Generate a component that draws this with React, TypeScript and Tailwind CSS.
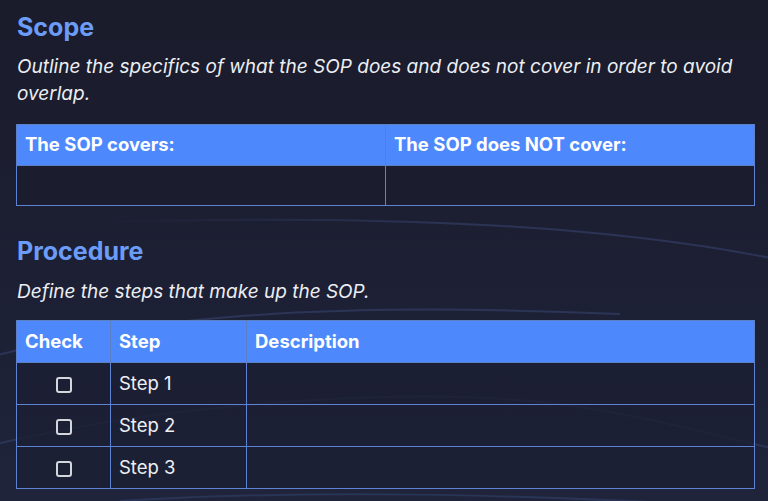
// SOP document section: Scope + Procedure tables on a dark backdrop

const font = { fontFamily: 'Inter, "Noto Sans", sans-serif' };

function Arcs() {
  return (
    <svg className="absolute inset-0 h-full w-full pointer-events-none" viewBox="0 0 768 501" preserveAspectRatio="none">
      <defs>
        <linearGradient id="fadeIn" x1="0" x2="1" y1="0" y2="0">
          <stop offset="0" stopColor="#3d4d80" stopOpacity="0" />
          <stop offset="0.5" stopColor="#3d4d80" stopOpacity="0.45" />
          <stop offset="1" stopColor="#3d4d80" stopOpacity="0.45" />
        </linearGradient>
      </defs>
      <path d="M-20 360 C 120 320, 300 300, 620 314" fill="none" stroke="#3d4d80" strokeOpacity="0.45" strokeWidth="2" />
      <path d="M100 222 C 400 214, 620 226, 790 262" fill="none" stroke="url(#fadeIn)" strokeWidth="2" />
      <path d="M-20 448 C 150 405, 400 385, 560 404 C 660 418, 730 440, 790 452" fill="none" stroke="#3d4d80" strokeOpacity="0.4" strokeWidth="2" />
      <path d="M120 501 C 300 490, 500 492, 800 510" fill="none" stroke="#3d4d80" strokeOpacity="0.4" strokeWidth="2" />
    </svg>
  );
}

function Checkbox() {
  return <span className="inline-block h-[16px] w-[16px] rounded-[3px] border-2 border-[#d4d6dc] align-middle" />;
}

export default function App() {
  const steps = ['Step 1', 'Step 2', 'Step 3'];
  return (
    <div className="relative h-[501px] w-[768px] overflow-hidden bg-gradient-to-b from-[#1a1b2b] to-[#1f243b]" style={font}>
      <Arcs />
      <div className="relative pl-4 pr-[13px] pt-[9px]">
        <h2 className="text-[25px] leading-[36px] font-bold text-[#6b9cf7] pl-[1px]">Scope</h2>
        <p className="mt-[8px] text-[19px] leading-[27px] italic text-[#eceef3] pl-[1px]">
          Outline the specifics of what the SOP does and does not cover in order to avoid overlap.
        </p>
        <table className="mt-[17px] w-[739px] border-collapse table-fixed text-[18.5px]">
          <thead>
            <tr className="bg-[#4d88fc] text-white">
              <th className="h-[41px] border border-[#5f7fc4] px-2 text-left font-bold">The SOP covers:</th>
              <th className="h-[41px] border border-[#5f7fc4] px-2 text-left font-bold">The SOP does NOT cover:</th>
            </tr>
          </thead>
          <tbody>
            <tr className="bg-[#1b1d30]/80">
              <td className="h-[40px] border border-[#5f83d4]"></td>
              <td className="h-[40px] border border-[#5f83d4]"></td>
            </tr>
          </tbody>
        </table>

        <h2 className="mt-[27px] text-[25px] leading-[36px] font-bold text-[#6b9cf7] pl-[1px]">Procedure</h2>
        <p className="mt-[9px] text-[19px] leading-[27px] italic text-[#eceef3] pl-[1px]">
          Define the steps that make up the SOP.
        </p>
        <table className="mt-[15px] w-[739px] border-collapse table-fixed text-[18.5px]">
          <colgroup>
            <col className="w-[94px]" />
            <col className="w-[136px]" />
            <col />
          </colgroup>
          <thead>
            <tr className="bg-[#4d88fc] text-white">
              <th className="h-[42px] border border-[#5f7fc4] px-2 text-left font-bold">Check</th>
              <th className="h-[42px] border border-[#5f7fc4] px-2 text-left font-bold">Step</th>
              <th className="h-[42px] border border-[#5f7fc4] px-2 text-left font-bold">Description</th>
            </tr>
          </thead>
          <tbody>
            {steps.map((s) => (
              <tr key={s} className="bg-[#1c1f33]/80 text-[#eef0f4]">
                <td className="h-[42px] border border-[#5f83d4] text-center">
                  <Checkbox />
                </td>
                <td className="h-[42px] border border-[#5f83d4] px-2">{s}</td>
                <td className="h-[42px] border border-[#5f83d4]"></td>
              </tr>
            ))}
          </tbody>
        </table>
      </div>
    </div>
  );
}
